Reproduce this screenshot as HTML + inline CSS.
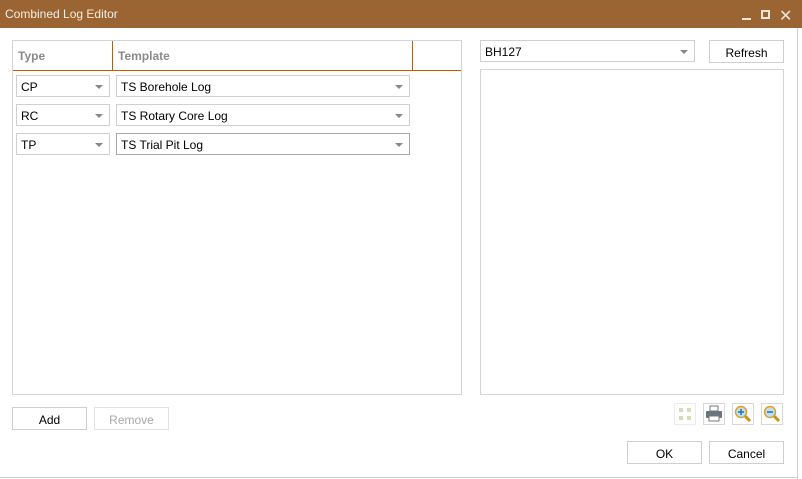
<!DOCTYPE html>
<html><head><meta charset="utf-8"><style>
*{box-sizing:border-box;margin:0;padding:0}
body{width:802px;height:479px;background:#fff;font-family:"Liberation Sans",sans-serif;font-size:12px;color:#000;position:relative;overflow:hidden}
.a{position:absolute}
.title{left:0;top:0;width:802px;height:28px;background:#9a6533;color:#f4ece4;font-size:12px;padding:7px 0 0 5px}
.box{border:1px solid #d4d4d4;background:#fff}
.dd{border:1px solid #d0d0d0;background:#fff;height:22px;padding:4px 0 0 4px}
.dd.dk{border-color:#a8a8a8}
.arr{position:absolute;right:6px;top:9px;width:0;height:0;border-left:4px solid transparent;border-right:4px solid transparent;border-top:4px solid #888}
.btn{border:1px solid #cfcfcf;background:#fff;text-align:center;padding-top:5px;height:23px}
.ib{width:22px;height:22px;border:1px solid #d8d8d8;background:#fff}
</style></head><body>
<div class="a title">Combined Log Editor</div>
<div class="a" style="left:742px;top:18px;width:9px;height:2px;background:#f0e4d8"></div>
<div class="a" style="left:761px;top:10px;width:9px;height:9px;border:2px solid #f0e4d8"></div>
<div class="a" style="left:779px;top:6px;color:#f0e4d8;font-size:16px">✕</div>
<div class="a" style="left:797px;top:28px;width:1px;height:451px;background:#cfcfcf"></div>
<div class="a" style="left:0;top:477px;width:798px;height:1px;background:#cfcfcf"></div>

<div class="a box" style="left:12px;top:40px;width:450px;height:355px"></div>
<div class="a" style="left:18px;top:49px;color:#8a8a8a;font-weight:bold">Type</div>
<div class="a" style="left:118px;top:49px;color:#8a8a8a;font-weight:bold">Template</div>
<div class="a" style="left:112px;top:41px;width:1px;height:29px;background:#a0652e"></div>
<div class="a" style="left:412px;top:41px;width:1px;height:29px;background:#a0652e"></div>
<div class="a" style="left:13px;top:70px;width:448px;height:1px;background:#a0652e"></div>

<div class="a dd" style="left:16px;top:75px;width:94px">CP<span class="arr"></span></div>
<div class="a dd" style="left:116px;top:75px;width:294px">TS Borehole Log<span class="arr"></span></div>
<div class="a dd" style="left:16px;top:104px;width:94px">RC<span class="arr"></span></div>
<div class="a dd" style="left:116px;top:104px;width:294px">TS Rotary Core Log<span class="arr"></span></div>
<div class="a dd" style="left:16px;top:133px;width:94px">TP<span class="arr"></span></div>
<div class="a dd dk" style="left:116px;top:133px;width:294px">TS Trial Pit Log<span class="arr"></span></div>

<div class="a btn" style="left:12px;top:407px;width:75px">Add</div>
<div class="a btn" style="left:94px;top:407px;width:75px;color:#a8a8a8;border-color:#e2e2e2">Remove</div>

<div class="a dd" style="left:480px;top:40px;width:215px">BH127<span class="arr"></span></div>
<div class="a btn" style="left:709px;top:40px;width:75px">Refresh</div>
<div class="a box" style="left:480px;top:69px;width:304px;height:326px"></div>

<div class="a ib" style="left:674px;top:403px;border-color:#ececec"><svg width="20" height="20"><g fill="#cfe0b8"><rect x="4" y="4" width="4" height="4"/><rect x="12" y="4" width="4" height="4"/><rect x="4" y="12" width="4" height="4"/><rect x="12" y="12" width="4" height="4"/></g></svg></div>
<div class="a ib" style="left:703px;top:403px"><svg width="20" height="20"><rect x="6" y="2" width="8" height="5" fill="#fff" stroke="#777"/><rect x="2" y="7" width="16" height="7" rx="1" fill="#6b7580"/><rect x="5" y="12" width="10" height="5" fill="#fff" stroke="#777"/></svg></div>
<div class="a ib" style="left:732px;top:403px"><svg width="20" height="20"><line x1="11" y1="11" x2="17" y2="17" stroke="#c8901c" stroke-width="3"/><circle cx="8" cy="8" r="5.5" fill="#bfe0f4" stroke="#d9a22c" stroke-width="1.5"/><path d="M5 8h6M8 5v6" stroke="#2a6cb8" stroke-width="1.5"/></svg></div>
<div class="a ib" style="left:761px;top:403px"><svg width="20" height="20"><line x1="11" y1="11" x2="17" y2="17" stroke="#c8901c" stroke-width="3"/><circle cx="8" cy="8" r="5.5" fill="#bfe0f4" stroke="#d9a22c" stroke-width="1.5"/><path d="M5 8h6" stroke="#2a6cb8" stroke-width="1.5"/></svg></div>

<div class="a btn" style="left:627px;top:441px;width:75px">OK</div>
<div class="a btn" style="left:709px;top:441px;width:75px">Cancel</div>
</body></html>
